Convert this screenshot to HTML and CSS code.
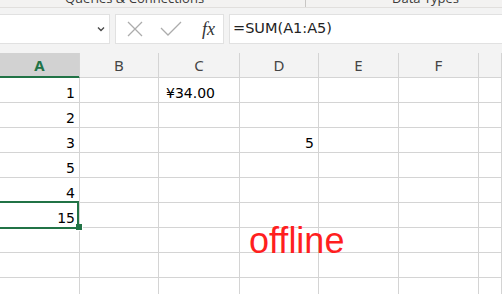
FILE: index.html
```html
<!DOCTYPE html>
<html lang="en">
<head>
<meta charset="UTF-8">
<meta name="viewport" content="width=device-width, initial-scale=1.0">
<title>Book1 - Excel</title>
<link rel="stylesheet" href="styles.css">
</head>
<body>

<div class="ribbon">
    <div class="group group-queries"><span class="group-label">Queries &amp; Connections</span></div>
    <div class="group group-types"><span class="group-label">Data Types</span></div>
</div>

<div class="formula-bar">
    <div class="name-box">
        <svg class="chevron" width="8" height="6" viewBox="0 0 8 6"><path d="M1 1.5 L4 4.5 L7 1.5" fill="none" stroke="#4a4a4a" stroke-width="1.4"/></svg>
    </div>
    <div class="fx-buttons">
        <svg width="18" height="18" viewBox="0 0 18 18"><path d="M2 2 L16 16 M16 2 L2 16" stroke="#acacac" stroke-width="1.3" fill="none"/></svg>
        <svg width="22" height="16" viewBox="0 0 22 16"><path d="M1 7 L8 14 L21 1" stroke="#acacac" stroke-width="1.3" fill="none"/></svg>
        <span class="fx">fx</span>
    </div>
    <div class="formula-input">=SUM(A1:A5)</div>
</div>

<div class="sheet">
    <div class="hd active">A</div>
    <div class="hd">B</div>
    <div class="hd">C</div>
    <div class="hd">D</div>
    <div class="hd">E</div>
    <div class="hd">F</div>
    <div class="hd"></div>

    <div class="cell num">1</div><div class="cell"></div><div class="cell acct">¥34.00</div><div class="cell"></div><div class="cell"></div><div class="cell"></div><div class="cell"></div>
    <div class="cell num">2</div><div class="cell"></div><div class="cell"></div><div class="cell"></div><div class="cell"></div><div class="cell"></div><div class="cell"></div>
    <div class="cell num">3</div><div class="cell"></div><div class="cell"></div><div class="cell num">5</div><div class="cell"></div><div class="cell"></div><div class="cell"></div>
    <div class="cell num">5</div><div class="cell"></div><div class="cell"></div><div class="cell"></div><div class="cell"></div><div class="cell"></div><div class="cell"></div>
    <div class="cell num">4</div><div class="cell"></div><div class="cell"></div><div class="cell"></div><div class="cell"></div><div class="cell"></div><div class="cell"></div>
    <div class="cell num">15</div><div class="cell"></div><div class="cell"></div><div class="cell"></div><div class="cell"></div><div class="cell"></div><div class="cell"></div>
    <div class="cell"></div><div class="cell"></div><div class="cell"></div><div class="cell"></div><div class="cell"></div><div class="cell"></div><div class="cell"></div>
    <div class="cell"></div><div class="cell"></div><div class="cell"></div><div class="cell"></div><div class="cell"></div><div class="cell"></div><div class="cell"></div>
    <div class="cell"></div><div class="cell"></div><div class="cell"></div><div class="cell"></div><div class="cell"></div><div class="cell"></div><div class="cell"></div>

    <div class="selection"></div>
    <div class="fill-handle"></div>
    <div class="offline">offline</div>
</div>

</body>
</html>
```

FILE: styles.css
```css
body {
    margin: 0;
    width: 502px;
    height: 294px;
    overflow: hidden;
    background: #ffffff;
    font-family: "DejaVu Sans", sans-serif;
}

.ribbon {
    display: flex;
    height: 7px;
    overflow: hidden;
    background: #f3f2f1;
    border-bottom: 1px solid #e1dfdd;
}
.group {
    box-sizing: border-box;
    font-family: "Open Sans", sans-serif;
    font-size: 13px;
    line-height: 13px;
    color: #3b3a39;
    white-space: nowrap;
}
.group-label {
    display: block;
    margin-top: -8px;
}
.group-queries {
    width: 306px;
    padding-left: 65px;
    border-right: 1px solid #c8c6c4;
}
.group-types {
    padding-left: 86px;
}

.formula-bar {
    display: flex;
    gap: 5px;
    height: 45px;
    padding-top: 6px;
    box-sizing: border-box;
    background: #f3f3f3;
}
.name-box, .fx-buttons, .formula-input {
    height: 30px;
    box-sizing: border-box;
    background: #ffffff;
    border: 1px solid #e1e1e1;
}
.name-box {
    width: 111px;
    margin-left: -1px;
    display: flex;
    align-items: center;
    justify-content: flex-end;
    padding-right: 4px;
}
.fx-buttons {
    width: 109px;
    display: flex;
    align-items: center;
    padding-left: 10px;
    gap: 16px;
}
.fx {
    font-family: "Liberation Serif", serif;
    font-style: italic;
    font-size: 18px;
    color: #333333;
    margin-left: 4px;
}
.formula-input {
    flex: 1;
    margin-right: -2px;
    padding-left: 3px;
    font-size: 14.5px;
    line-height: 27px;
    color: #222222;
}

.sheet {
    position: relative;
    display: grid;
    grid-template-columns: 80px 79px 81px 79px 80px 80px 1fr;
    grid-template-rows: 25px repeat(9, 25px);
    background: #ffffff;
}
.hd, .cell {
    box-sizing: border-box;
    border-right: 1px solid #d4d4d4;
    border-bottom: 1px solid #d4d4d4;
}
.hd {
    background: #f3f3f3;
    font-family: "Noto Sans", sans-serif;
    font-size: 15px;
    line-height: 24px;
    text-align: center;
    color: #444444;
}
.hd.active {
    background: #d2d2d2;
    color: #217346;
    font-weight: bold;
    border-bottom-color: #217346;
    box-shadow: inset 0 -1px 0 #217346;
}
.cell {
    display: flex;
    align-items: flex-end;
    padding: 0 4px 2px 4px;
    font-size: 14px;
    line-height: 1;
    color: #000000;
}
.cell.num {
    justify-content: flex-end;
}
.cell.acct {
    padding-left: 7px;
}

.selection {
    position: absolute;
    left: -3px;
    top: 148px;
    width: 82px;
    height: 28px;
    box-sizing: border-box;
    border: 2px solid #217346;
}
.fill-handle {
    position: absolute;
    left: 76px;
    top: 171px;
    width: 6px;
    height: 6px;
    background: #217346;
    border: 1px solid #ffffff;
    border-top: none;
    border-left: none;
}
.offline {
    position: absolute;
    left: 249px;
    top: 170px;
    font-family: "Liberation Sans", sans-serif;
    font-size: 36px;
    line-height: 36px;
    color: #ff1f1f;
}
```
